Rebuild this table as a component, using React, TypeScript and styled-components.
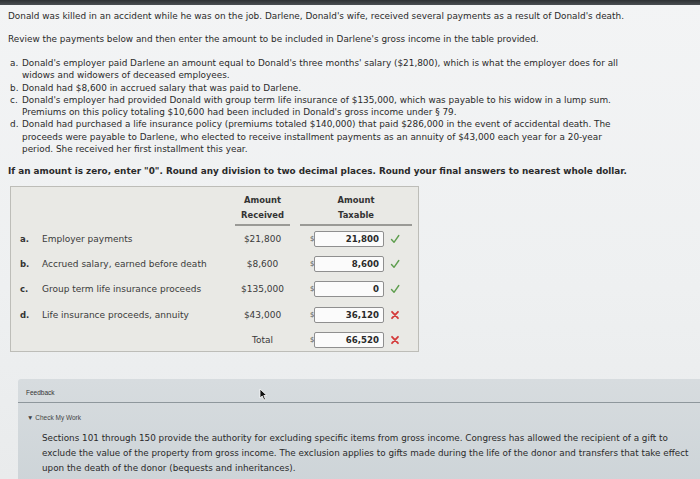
import React from "react";
import styled, { createGlobalStyle } from "styled-components";

const GlobalStyle = createGlobalStyle`
  html, body { margin: 0; padding: 0; }
  body {
    background: #eceef0;
    font-family: "DejaVu Sans", Verdana, sans-serif;
    color: #2a2a2a;
  }
`;

const Page = styled.div`
  width: 700px;
  height: 479px;
  overflow: hidden;
  position: relative;
  background: linear-gradient(180deg, #f3f4f5 0%, #eef0f1 60%, #e9ebec 100%);
`;

const TopBar = styled.div`
  height: 5px;
  background: linear-gradient(180deg, #2e3134, #4a4e52);
`;

const Content = styled.div`
  padding: 0 0 0 8px;
`;

const Para = styled.p<{ $top: number }>`
  margin: ${(p) => p.$top}px 0 0 0;
  font-size: 8.9px;
  line-height: 12px;
`;

const List = styled.ol`
  list-style: none;
  margin: 12px 0 0 0;
  padding: 0;
`;

const Item = styled.li`
  display: grid;
  grid-template-columns: 12px 1fr;
  padding-left: 2px;
  font-size: 8.9px;
  line-height: 12.3px;
  width: 622px;
`;

const Bold = styled.p`
  margin: 10px 0 0 0;
  font-size: 8.85px;
  font-weight: bold;
  line-height: 12px;
  white-space: nowrap;
`;

const TableBox = styled.div`
  margin: 9px 0 0 2px;
  width: 409px;
  height: 166px;
  border: 1px solid #bdbdb8;
  background: #e9e9e5;
  box-sizing: border-box;
  padding: 6px 0 0 9px;
`;

const Grid = styled.div`
  display: grid;
  grid-template-columns: 22px 193px 55px 10px 112px;
`;

const HeadCell = styled.div<{ $col: number }>`
  grid-column: ${(p) => p.$col};
  font-size: 8.4px;
  font-weight: bold;
  line-height: 15px;
  text-align: center;
  color: #333;
  padding-bottom: 1px;
  border-bottom: 2px solid #9a9a96;
`;

const Cell = styled.div<{ $align?: string }>`
  height: 25.2px;
  display: flex;
  align-items: center;
  justify-content: ${(p) => p.$align || "flex-start"};
  font-size: 9px;
  color: #3a3a3a;
  white-space: nowrap;
`;

const Letter = styled(Cell)`
  font-weight: bold;
  color: #333;
  font-size: 8.5px;
`;

const Answer = styled(Cell)`
  padding-left: 10px;
`;

const Dollar = styled.span`
  font-size: 7px;
  color: #555;
  width: 4px;
`;

const Input = styled.div`
  width: 70px;
  height: 16px;
  box-sizing: border-box;
  border: 1px solid #8f8f8f;
  border-radius: 2px;
  background: #fbfbfb;
  display: flex;
  align-items: center;
  justify-content: flex-end;
  padding-right: 4px;
  font-size: 8.6px;
  font-weight: bold;
  color: #2a2a2a;
`;

const MarkIcon = styled.svg`
  margin-left: 6px;
  flex: none;
`;

const Feedback = styled.div`
  margin: 27px 0 0 18px;
  background: linear-gradient(180deg, #d7dcdf, #ccd3d7);
  border-top-left-radius: 3px;
  height: 120px;
`;

const FeedHead = styled.div`
  height: 24px;
  box-sizing: border-box;
  padding: 10px 0 0 8px;
  font-family: "Liberation Sans", Arial, sans-serif;
  font-size: 6.5px;
  color: #333;
  border-bottom: 1.5px solid #8e979c;
`;

const Toggle = styled.div`
  padding: 11px 0 0 9px;
  font-family: "Liberation Sans", Arial, sans-serif;
  font-size: 6.5px;
  color: #444;
`;

const FeedBody = styled.p`
  margin: 10px 0 0 24px;
  font-size: 8.8px;
  line-height: 15px;
  color: #2a2a2a;
  width: 650px;
`;

const Cursor = styled.svg`
  position: absolute;
  left: 259px;
  top: 388px;
`;

function Mark({ ok }: { ok: boolean }) {
  return ok ? (
    <MarkIcon width="10" height="10" viewBox="0 0 10 10">
      <path d="M1.5 5.5 L4 8.3 L8.8 1.5" fill="none" stroke="#5e9e4e" strokeWidth="1.4" strokeLinecap="round" strokeLinejoin="round" />
    </MarkIcon>
  ) : (
    <MarkIcon width="10" height="10" viewBox="0 0 10 10">
      <path d="M2 1.8 L8 8.2 M8 1.8 L2 8.2" fill="none" stroke="#d43b3b" strokeWidth="1.8" strokeLinecap="round" />
    </MarkIcon>
  );
}

const rows = [
  { l: "a.", d: "Employer payments", r: "$21,800", v: "21,800", ok: true },
  { l: "b.", d: "Accrued salary, earned before death", r: "$8,600", v: "8,600", ok: true },
  { l: "c.", d: "Group term life insurance proceeds", r: "$135,000", v: "0", ok: true },
  { l: "d.", d: "Life insurance proceeds, annuity", r: "$43,000", v: "36,120", ok: false },
];

export default function App() {
  return (
    <Page>
      <GlobalStyle />
      <TopBar />
      <Content>
        <Para $top={5}>
          Donald was killed in an accident while he was on the job. Darlene, Donald's wife, received several payments as a result of Donald's death.
        </Para>
        <Para $top={11}>
          Review the payments below and then enter the amount to be included in Darlene's gross income in the table provided.
        </Para>
        <List>
          <Item>
            <span>a.</span>
            <span>
              Donald's employer paid Darlene an amount equal to Donald's three months' salary ($21,800), which is what the employer does for all widows and widowers of deceased employees.
            </span>
          </Item>
          <Item>
            <span>b.</span>
            <span>Donald had $8,600 in accrued salary that was paid to Darlene.</span>
          </Item>
          <Item>
            <span>c.</span>
            <span>
              Donald's employer had provided Donald with group term life insurance of $135,000, which was payable to his widow in a lump sum. Premiums on this policy totaling $10,600 had been included in Donald's gross income under § 79.
            </span>
          </Item>
          <Item>
            <span>d.</span>
            <span>
              Donald had purchased a life insurance policy (premiums totaled $140,000) that paid $286,000 in the event of accidental death. The proceeds were payable to Darlene, who elected to receive installment payments as an annuity of $43,000 each year for a 20-year period. She received her first installment this year.
            </span>
          </Item>
        </List>
        <Bold>
          If an amount is zero, enter "0". Round any division to two decimal places. Round your final answers to nearest whole dollar.
        </Bold>
        <TableBox>
          <Grid>
            <HeadCell $col={3}>
              Amount
              <br />
              Received
            </HeadCell>
            <HeadCell $col={5}>
              Amount
              <br />
              Taxable
            </HeadCell>
            {rows.map((r) => (
              <React.Fragment key={r.l}>
                <Letter>{r.l}</Letter>
                <Cell>{r.d}</Cell>
                <Cell $align="center">{r.r}</Cell>
                <span />
                <Answer>
                  <Dollar>$</Dollar>
                  <Input>{r.v}</Input>
                  <Mark ok={r.ok} />
                </Answer>
              </React.Fragment>
            ))}
            <span />
            <span />
            <Cell $align="center">Total</Cell>
            <span />
            <Answer>
              <Dollar>$</Dollar>
              <Input>66,520</Input>
              <Mark ok={false} />
            </Answer>
          </Grid>
        </TableBox>
      </Content>
      <Feedback>
        <FeedHead>Feedback</FeedHead>
        <Toggle>▼ Check My Work</Toggle>
        <FeedBody>
          Sections 101 through 150 provide the authority for excluding specific items from gross income. Congress has allowed the recipient of a gift to exclude the value of the property from gross income. The exclusion applies to gifts made during the life of the donor and transfers that take effect upon the death of the donor (bequests and inheritances).
        </FeedBody>
      </Feedback>
      <Cursor width="9" height="13" viewBox="0 0 9 13">
        <path d="M1 1 L1 10 L3.2 8 L5 12 L6.5 11.3 L4.8 7.5 L7.8 7.5 Z" fill="#111" stroke="#fff" strokeWidth="0.8" />
      </Cursor>
    </Page>
  );
}
